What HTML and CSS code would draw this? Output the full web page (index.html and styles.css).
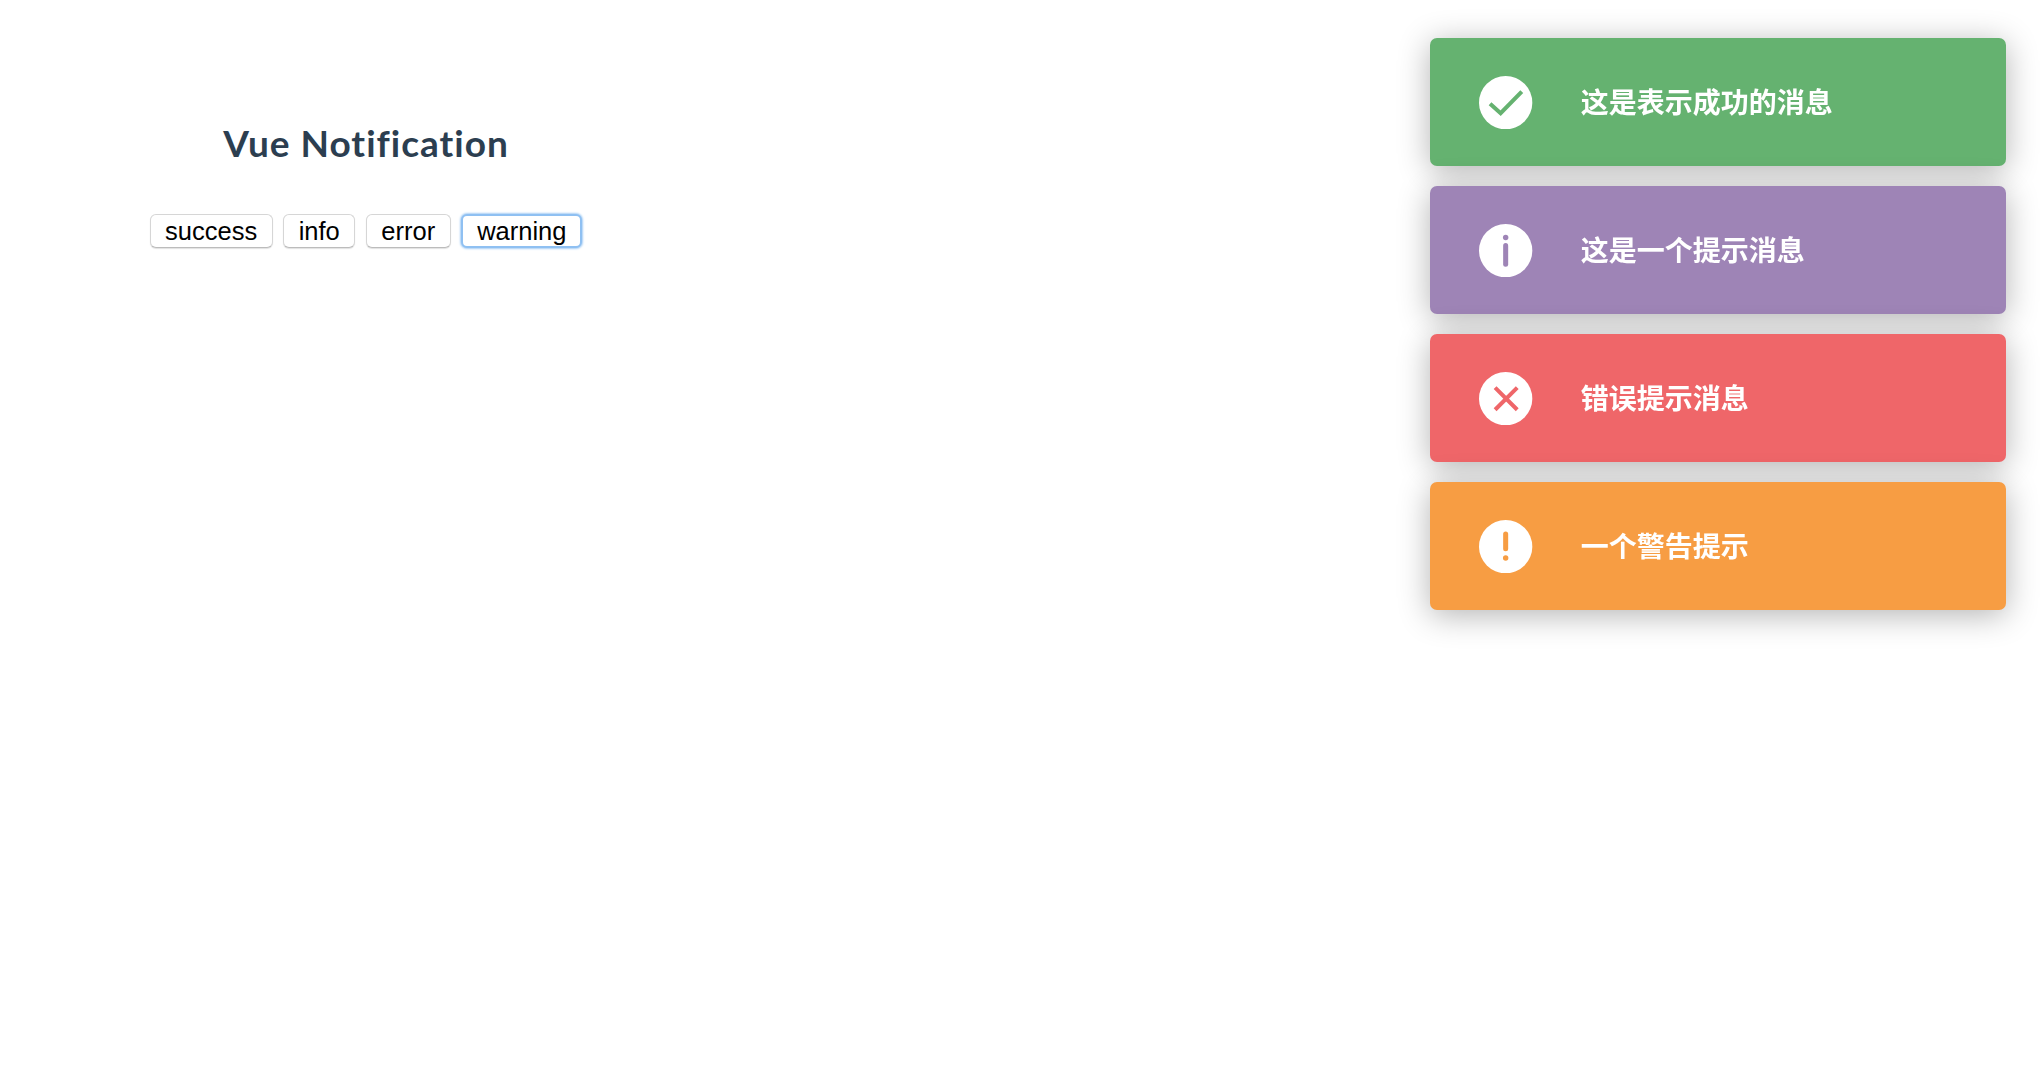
FILE: index.html
```html
<!DOCTYPE html>
<html lang="zh-CN">
<head>
<meta charset="utf-8">
<title>Vue Notification</title>
<link rel="stylesheet" href="styles.css">
</head>
<body>
<main class="app">
  <h1 class="title">Vue Notification</h1>
  <div class="actions">
    <button class="btn" type="button">success</button>
    <button class="btn" type="button">info</button>
    <button class="btn" type="button">error</button>
    <button class="btn btn-focus" type="button">warning</button>
  </div>
</main>
<aside class="stack">
  <div class="note note-success">
    <span class="badge"><svg viewBox="0 0 53 53"><circle cx="26.5" cy="26.5" r="26.5" fill="#fff"/><path d="M11 27.5 L21.5 37 L42.5 15.5" fill="none" stroke="#65b270" stroke-width="4"/></svg></span>
    <span class="msg">这是表示成功的消息</span>
  </div>
  <div class="note note-info">
    <span class="badge"><svg viewBox="0 0 53 53"><circle cx="26.5" cy="26.5" r="26.5" fill="#fff"/><circle cx="26.5" cy="13.5" r="2.7" fill="#9e84b6"/><path d="M26.5 21.5 V40" fill="none" stroke="#9e84b6" stroke-width="5" stroke-linecap="round"/></svg></span>
    <span class="msg">这是一个提示消息</span>
  </div>
  <div class="note note-error">
    <span class="badge"><svg viewBox="0 0 53 53"><circle cx="26.5" cy="26.5" r="26.5" fill="#fff"/><path d="M16 15.5 L38 37.5 M38 15.5 L16 37.5" fill="none" stroke="#ef6669" stroke-width="4"/></svg></span>
    <span class="msg">错误提示消息</span>
  </div>
  <div class="note note-warning">
    <span class="badge"><svg viewBox="0 0 53 53"><circle cx="26.5" cy="26.5" r="26.5" fill="#fff"/><path d="M26.5 14 V28.5" fill="none" stroke="#f79d43" stroke-width="5" stroke-linecap="round"/><circle cx="26.5" cy="37.7" r="2.7" fill="#f79d43"/></svg></span>
    <span class="msg">一个警告提示</span>
  </div>
</aside>
</body>
</html>
```
FILE: styles.css
```css
html, body {
  margin: 0;
  height: 100%;
  background: #fff;
}
body {
  overflow: hidden;
}
.app {
  width: 732px;
  padding-top: 120px;
  text-align: center;
  font-family: Lato, "Noto Sans", sans-serif;
}
.title {
  margin: 0;
  font-size: 37px;
  line-height: 46px;
  font-weight: 700;
  letter-spacing: 1px;
  font-variant-ligatures: none;
  color: #2c3e50;
}
.actions {
  margin-top: 48px;
  display: flex;
  justify-content: center;
  gap: 10.5px;
}
.btn {
  box-sizing: border-box;
  height: 34px;
  padding: 0 14.5px;
  border: 1px solid #d6d6d6;
  border-bottom-color: #bcbcbc;
  border-radius: 6px;
  background: #fff;
  box-shadow: 0 1px 1px rgba(0, 0, 0, .12);
  color: #000;
  font-family: "Liberation Sans", Arial, sans-serif;
  font-size: 25.5px;
  line-height: 30px;
}
.btn-focus {
  padding: 0 14px;
  border: 2px solid #8fc0f2;
  box-shadow: 0 0 2px 1px #a9cff5;
}
.stack {
  position: fixed;
  top: 38px;
  right: 38px;
  width: 576px;
  display: flex;
  flex-direction: column;
  gap: 20px;
}
.note {
  height: 128px;
  border-radius: 7px;
  display: flex;
  align-items: center;
  padding-left: 49.33px;
  box-shadow: 0 5px 32px rgba(0, 0, 0, .3);
  color: #fff;
  font-family: "Noto Sans CJK SC", "Noto Sans", sans-serif;
  font-size: 28px;
  font-weight: 700;
}
.note-success { background: #65b270; }
.note-info { background: #9e84b6; }
.note-error { background: #ef6669; }
.note-warning { background: #f79d43; }
.badge {
  display: block;
  width: 53.33px;
  height: 53.33px;
  margin: 1px 48px 0 0;
}
.badge svg {
  display: block;
  width: 100%;
  height: 100%;
}
.msg {
  position: relative;
  top: -1px;
}
```
